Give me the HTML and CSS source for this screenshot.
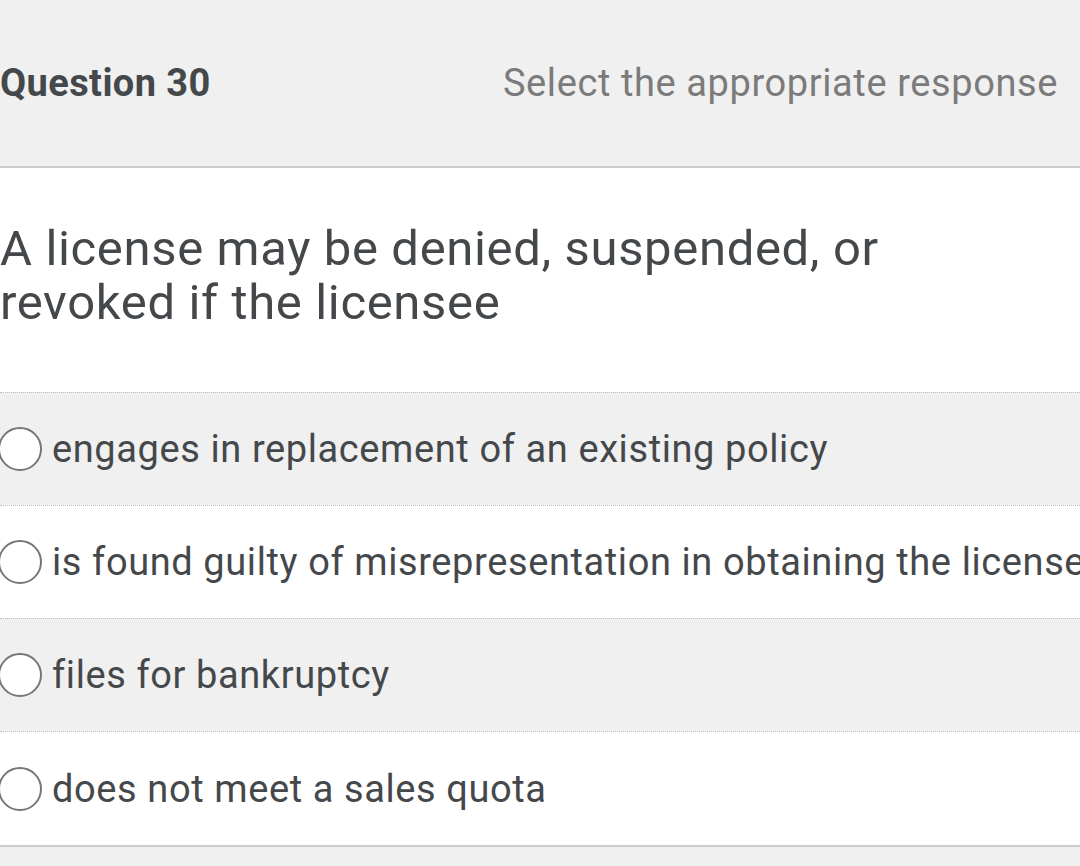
FILE: index.html
```html
<!DOCTYPE html>
<html>
<head>
<meta charset="utf-8">
<link rel="stylesheet" href="styles.css">
</head>
<body>
<div class="page">
  <header class="qhead">
    <div class="qnum">Question 30</div>
    <div class="qhint">Select the appropriate response</div>
  </header>
  <div class="qtext">A license may be denied, suspended, or<br>revoked if the licensee</div>
  <div class="options">
    <div class="opt alt"><span class="radio"></span><span class="label">engages in replacement of an existing policy</span></div>
    <div class="opt"><span class="radio"></span><span class="label">is found guilty of misrepresentation in obtaining the license</span></div>
    <div class="opt alt"><span class="radio"></span><span class="label">files for bankruptcy</span></div>
    <div class="opt last"><span class="radio"></span><span class="label">does not meet a sales quota</span></div>
  </div>
  <div class="foot"></div>
</div>
</body>
</html>
```
FILE: styles.css
```css
html, body {
  margin: 0;
  padding: 0;
  background: #ffffff;
  overflow: hidden;
}
body {
  font-family: Roboto, "Liberation Sans", sans-serif;
  color: #45484b;
  width: 1080px;
  height: 866px;
}
.page {
  display: flex;
  flex-direction: column;
  width: 1080px;
}
.qhead {
  display: flex;
  justify-content: space-between;
  align-items: center;
  height: 166px;
  background: #f0f0f0;
  border-bottom: 2px solid #c9cecc;
  padding: 0 22px 0 0;
}
.qnum {
  font-weight: 700;
  font-size: 38px;
  letter-spacing: 0.4px;
  color: #45484b;
}
.qhint {
  font-size: 38px;
  letter-spacing: 0.6px;
  color: #7b7b7b;
}
.qtext {
  font-size: 49px;
  line-height: 54px;
  letter-spacing: 0.65px;
  padding-top: 54px;
  height: 170px;
  box-sizing: border-box;
  white-space: nowrap;
}
.options {
  display: flex;
  flex-direction: column;
  margin-top: 54px;
}
.opt {
  display: flex;
  align-items: center;
  gap: 10px;
  height: 112px;
  border-top: 1px dotted #bdbdbd;
  background: #ffffff;
  white-space: nowrap;
  overflow: hidden;
}
.opt.last {
  height: 113px;
}
.opt.alt {
  background: #f0f0f0;
}
.radio {
  flex: none;
  width: 40px;
  height: 40px;
  margin-left: -2px;
  border: 2px solid #767676;
  border-radius: 50%;
  background: #ffffff;
}
.label {
  font-size: 38px;
  letter-spacing: 0.6px;
  color: #45484b;
}
.foot {
  height: 40px;
  border-top: 2px solid #c9cecc;
  background: #f0f0f0;
}
```
